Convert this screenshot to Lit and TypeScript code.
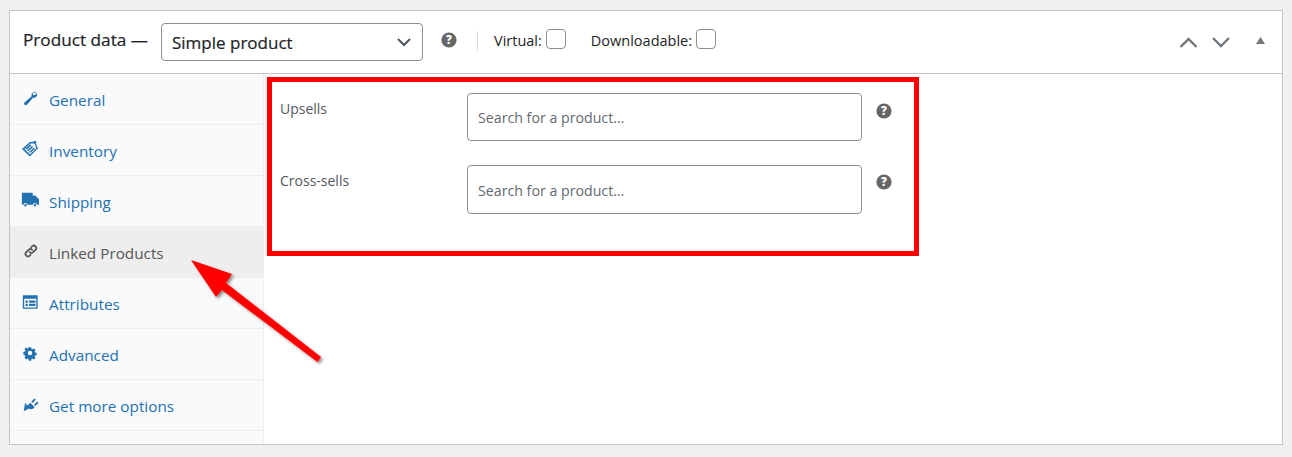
import { LitElement, html, css, svg } from "lit";
import { customElement } from "lit/decorators.js";

const icons: Record<string, unknown> = {
  wrench: svg`<path transform="translate(2 2) scale(.88)" d="M17.600 1.800c-1.700-.9-3.900-.6-5.300.8-1.200 1.200-1.600 2.900-1.100 4.400L2.400 14.300c-1 1-1 2.400-.1 3.300.9.9 2.400.8 3.300-.2l7.300-8.700c1.500.4 3.100 0 4.200-1.200 1.200-1.300 1.500-3.100.8-4.600l-2.700 2.700-2.300-.5-.5-2.300z"/>`,
  tag: svg`<path fill-rule="evenodd" d="M15 .8l1 .2.9.9.2 1-.6.9 2.300 5.700-8.900 8.900L1.100 10l8.900-7.900 4-.2zM10.700 4L3.800 9.900l6.300 6.200L17 9.200l-2-5.400z"/><path d="M10.400 4.900l1.300 1.200-5.500 4.600-1.300-1.200zM12.300 6.700l1.300 1.200-5.500 4.600-1.300-1.200zM14.300 8.600l1.300 1.200-5.500 4.600-1.300-1.200z"/>`,
  truck: svg`<path d="M1 2h12v3h3l4 4.200v6h-2.300a2.300 2.300 0 0 0-4.500 0H7.300a2.300 2.300 0 0 0-4.500 0H1zM5 14.500a1.400 1.400 0 1 1 0 2.800 1.400 1.400 0 0 1 0-2.800zM15.500 14.500a1.400 1.400 0 1 1 0 2.800 1.400 1.400 0 0 1 0-2.800z"/>`,
  link: svg`<path transform="translate(2.500 1.500) scale(.85)" fill="none" stroke="currentColor" stroke-width="2.300" stroke-linecap="round" d="M8.400 11.600a3.200 3.200 0 0 0 4.500 0l3.400-3.400a3.200 3.200 0 0 0-4.500-4.500L10.400 5.100M11.600 8.400a3.200 3.200 0 0 0-4.500 0l-3.400 3.400a3.200 3.200 0 0 0 4.500 4.500l1.400-1.400"/>`,
  attr: svg`<path fill-rule="evenodd" d="M2 2.500h16.500v15H2zM3.500 6.500v9.500h13.500V6.500z"/><path d="M5 8.200h2.500v2.500H5zM9 8.200h7v2.500H9zM5 12h2.500v2.500H5zM9 12h7v2.500H9z"/>`,
  gear: svg`<path transform="translate(2 2) scale(.8)" fill-rule="evenodd" d="M8.400 2h3.200l.5 2.300 1.300.6 2-1.300 2.300 2.300-1.300 2 .6 1.300 2.300.5v3.200l-2.300.5-.6 1.300 1.300 2-2.300 2.300-2-1.300-1.300.6-.5 2.300H8.400l-.5-2.300-1.300-.6-2 1.300-2.300-2.300 1.300-2-.6-1.300L.7 11.600V8.400l2.300-.5.6-1.300-1.300-2 2.300-2.300 2 1.300 1.300-.6zM10 6.900a3.100 3.100 0 1 0 0 6.200 3.100 3.100 0 0 0 0-6.200z"/>`,
  plug: svg`<path d="M3 18L4.500 9l2.800 2.800 3-3.300 5 5c-2.200 2.400-5 3-7 1.600L6.900 16zM11.300 7.500l3.700-3.700 1.500 1.300-3.500 3.700zM14.500 10.700l3.700-3.500 1.300 1.400-3.500 3.500z"/>`,
};

const tabs = [
  ["General", "wrench"],
  ["Inventory", "tag"],
  ["Shipping", "truck"],
  ["Linked Products", "link"],
  ["Attributes", "attr"],
  ["Advanced", "gear"],
  ["Get more options", "plug"],
];

@customElement("app-root")
export class AppRoot extends LitElement {
  static styles = css`
    :host {
      display: block;
      position: relative;
      width: 1292px;
      height: 457px;
      overflow: hidden;
      background: #f0f0f1;
      font-family: "Open Sans", "Noto Sans", sans-serif;
      color: #1d2327;
    }
    .page { padding: 10px 9px 12px; height: 457px; box-sizing: border-box; }
    .panel {
      height: 435px;
      box-sizing: border-box;
      background: #fff;
      border: 1px solid #c3c4c7;
      display: flex;
      flex-direction: column;
    }
    .head {
      height: 63px;
      flex: none;
      box-sizing: border-box;
      border-bottom: 1px solid #c3c4c7;
      display: flex;
      align-items: flex-start;
      position: relative;
    }
    .title { font-size: 17.2px; font-weight: 500; margin: 18px 13px 0 13px; line-height: 22px; -webkit-text-stroke: .2px #1d2327; }
    .select {
      width: 262px;
      height: 38px;
      margin-top: 12px;
      box-sizing: border-box;
      border: 1px solid #8c8f94;
      border-radius: 4px;
      display: flex;
      align-items: center;
      justify-content: space-between;
      padding: 0 10px;
      font-size: 17px;
      -webkit-text-stroke: .2px #1d2327;
    }
    .help { width: 16px; height: 16px; flex: none; }
    .help-head { margin: 21px 0 0 18px; }
    .sep { width: 1px; height: 20px; background: #dcdcde; margin: 20px 16px 0 20px; }
    .check-label { font-size: 14.5px; line-height: 20px; margin-top: 20px; }
    .box {
      width: 20px; height: 20px; box-sizing: border-box;
      border: 1px solid #8c8f94; border-radius: 4px; background: #fff;
      margin: 18px 0 0 4px;
    }
    .gap { margin-left: 25px; }
    .arrows { position: absolute; right: 0; top: 0; }
    .body { flex: 1; display: flex; min-height: 0; }
    .side {
      width: 254px;
      flex: none;
      box-sizing: border-box;
      background: #fafafa;
      border-right: 1px solid #eee;
    }
    .tab {
      height: 51px;
      box-sizing: border-box;
      border-bottom: 1px solid #eee;
      display: flex;
      align-items: center;
      gap: 10px;
      padding: 0 0 0 11px;
      font-size: 15.3px;
      color: #2271b1;
    }
    .tab span { padding-top: 1px; }
    .tab.on { background: #eee; color: #555; }
    .tab svg { width: 18px; height: 18px; flex: none; fill: currentColor; margin-top: -3px; }
    .main { flex: 1; padding: 9px 0 0 16px; }
    .field { display: flex; align-items: flex-start; height: 72px; }
    .field label { width: 187px; font-size: 14px; line-height: 20px; color: #50575e; margin-top: 16px; }
    .input {
      width: 395px; height: 48px; box-sizing: border-box;
      border: 1px solid #8c8f94; border-radius: 4px;
      margin-top: 10px;
      padding: 0 10px; display: flex; align-items: center;
      font-size: 14.2px; color: #646970;
    }
    .field + .field .input { height: 49px; padding-top: 1px; }
    .help-f { margin: 20px 0 0 14px; }
    .field + .field .help-f { margin-top: 19px; }
    .redbox {
      position: absolute; left: 267px; top: 77px; width: 652px; height: 179px;
      box-sizing: border-box; border: 5px solid #fe0000;
    }
    .arrow { position: absolute; left: 180px; top: 250px; width: 160px; height: 125px; }
  `;

  help(cls: string) {
    return html`<svg class="help ${cls}" viewBox="0 0 16 16"><circle cx="8" cy="8" r="7.6" fill="#666"/><text x="8" y="12.2" text-anchor="middle" font-family="Open Sans, sans-serif" font-weight="800" font-size="11.5" fill="#fff">?</text></svg>`;
  }

  render() {
    return html`
      <div class="page">
        <div class="panel">
          <div class="head">
            <div class="title">Product data —</div>
            <div class="select">
              <span>Simple product</span>
              <svg width="16" height="10" viewBox="0 0 16 10"><path d="M2 2l6 6 6-6" fill="none" stroke="#50575e" stroke-width="2"/></svg>
            </div>
            ${this.help("help-head")}
            <div class="sep"></div>
            <div class="check-label">Virtual:</div><div class="box"></div>
            <div class="check-label gap">Downloadable:</div><div class="box"></div>
            <svg class="arrows" width="110" height="62" viewBox="0 0 110 62">
              <path d="M8.500 36l8-8 8 8M41 27l8 8 8-8" fill="none" stroke="#72777c" stroke-width="2.400"/>
              <path d="M84 33h9l-4.500-7z" fill="#72777c"/>
            </svg>
          </div>
          <div class="body">
            <div class="side">
              ${tabs.map(([t, i]) => html`<div class="tab ${t === "Linked Products" ? "on" : ""}"><svg viewBox="0 0 20 20">${icons[i]}</svg><span>${t}</span></div>`)}
            </div>
            <div class="main">
              <div class="field"><label>Upsells</label><div class="input">Search for a product…</div>${this.help("help-f")}</div>
              <div class="field"><label>Cross-sells</label><div class="input">Search for a product…</div>${this.help("help-f")}</div>
            </div>
          </div>
        </div>
      </div>
      <div class="redbox"></div>
      <svg class="arrow" viewBox="0 0 160 125">
        <defs><filter id="s" x="-20%" y="-20%" width="140%" height="140%"><feDropShadow dx="2" dy="2" stdDeviation="1.500" flood-color="#000" flood-opacity=".45"/></filter></defs>
        <path filter="url(#s)" d="M11 10L52 24 46 33 141 107 137.500 112 42 40 36 47z" fill="#fe0000"/>
      </svg>
    `;
  }
}
